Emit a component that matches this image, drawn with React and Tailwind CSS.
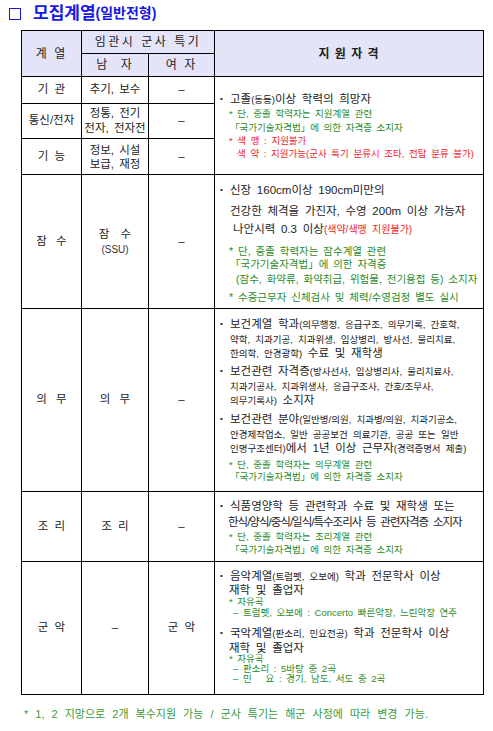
import React from "react";

const MAIN = "text-[11.5px] text-[#222] [word-spacing:2.5px]";
const NOTE = "text-[9.5px] text-[#2b8c2b] [word-spacing:2px]";
const NOTE10 = "text-[10.5px] text-[#2b8c2b] [word-spacing:2px]";
const RED = "text-[9.5px] text-[#f0262e] [word-spacing:2px]";

function Line({ className = "", children }) {
  return (
    <div className={"whitespace-nowrap h-[12px] leading-[12px] " + className}>
      {children}
    </div>
  );
}

function Tight({ className = "", children }) {
  return (
    <div className={"whitespace-nowrap h-[10px] leading-[10px] " + className}>
      {children}
    </div>
  );
}

function B({ className = "", children }) {
  return (
    <div className={"flex whitespace-nowrap h-[12px] leading-[12px] " + MAIN + " " + className}>
      <span className="w-[10px] shrink-0 text-[8px]">•</span>
      <span>{children}</span>
    </div>
  );
}

function S({ children }) {
  return <span className="text-[9.5px] [word-spacing:2.5px]">{children}</span>;
}

export default function App() {
  return (
    <div className="w-[493px] h-[731px] bg-white font-['Liberation_Sans','Noto_Sans_CJK_KR',sans-serif] text-[#222]">
      <div className="h-[30px] pt-[3px] pl-[9px] flex items-start">
        <div className="flex items-center h-[21px] text-[#1717e6]">
          <span className="inline-block w-[12px] h-[12px] border border-[#1717e6]" />
          <span className="ml-[12px] text-[17px] font-bold">모집계열</span>
          <span className="text-[14px] font-bold">(일반전형)</span>
        </div>
      </div>

      <table className="ml-[21px] w-[462px] table-fixed border-collapse text-[11.5px]">
        <colgroup>
          <col className="w-[60px]" />
          <col className="w-[67px]" />
          <col className="w-[66px]" />
          <col className="w-[269px]" />
        </colgroup>
        <tbody>
          <tr className="h-[23px] bg-[#e4e4f9]">
            <td rowSpan={2} className="border border-black text-center align-middle text-[12px] tracking-[2px]">계 열</td>
            <td colSpan={2} className="border border-black text-center align-middle text-[12px] tracking-[2.5px]">임관시 군사 특기</td>
            <td rowSpan={2} className="border border-black text-center align-middle text-[12px] font-semibold tracking-[1px]">지 원 자 격</td>
          </tr>
          <tr className="h-[23px] bg-[#e4e4f9]">
            <td className="border border-black text-center align-middle text-[12px] tracking-[2px] [word-spacing:6px]">남 자</td>
            <td className="border border-black text-center align-middle text-[12px] tracking-[2px]">여 자</td>
          </tr>

          <tr className="h-[27px]">
            <td className="border border-black text-center align-middle [word-spacing:3px]">기 관</td>
            <td className="border border-black text-center align-middle [word-spacing:2px]">추기, 보수</td>
            <td className="border border-black text-center align-middle">–</td>
            <td rowSpan={3} className="border border-black align-top pt-[16px] pl-[5px]">
              <B>
                고졸<S>(동등)</S>이상 학력의 희망자
              </B>
              <Line className={NOTE + " mt-[3px] pl-[9px]"}>* 단, 중졸 학력자는 지원계열 관련</Line>
              <Line className={NOTE + " mt-[2px] pl-[10px]"}>「국가기술자격법」에 의한 자격증 소지자</Line>
              <Line className={RED + " mt-[1px] pl-[9px]"}>* 색 맹 : 지원불가</Line>
              <Line className={RED + " mt-[1px] pl-[17px]"}>색 약 : 지원가능(군사 특기 분류시 조타, 전탐 분류 불가)</Line>
            </td>
          </tr>
          <tr className="h-[35px]">
            <td className="border border-black text-center align-middle">통신/전자</td>
            <td className="border border-black text-center align-middle leading-[15px] [word-spacing:2px]">
              정통, 전기
              <br />
              전자, 전자전
            </td>
            <td className="border border-black text-center align-middle">–</td>
          </tr>
          <tr className="h-[36px]">
            <td className="border border-black text-center align-middle [word-spacing:3px]">기 능</td>
            <td className="border border-black text-center align-middle leading-[14px] [word-spacing:2px]">
              정보, 시설
              <br />
              보급, 재정
            </td>
            <td className="border border-black text-center align-middle">–</td>
          </tr>

          <tr className="h-[134px]">
            <td className="border border-black text-center align-middle [word-spacing:6px]">잠 수</td>
            <td className="border border-black text-center align-middle">
              <div className="leading-[14px] pb-[3px] [word-spacing:8px]">잠 수</div>
              <div className="leading-[12px] text-[10px] text-[#333]">(SSU)</div>
            </td>
            <td className="border border-black text-center align-middle">–</td>
            <td className="border border-black align-top pt-[9px] pl-[5px]">
              <B>신장 160cm이상 190cm미만의</B>
              <Line className={MAIN + " mt-[9px] pl-[10px]"}>건강한 체격을 가진자, 수영 200m 이상 가능자</Line>
              <Line className={MAIN + " mt-[6px] pl-[13px]"}>
                나안시력 0.3 이상<span className="text-[10px] text-[#f0262e]">(색약/색맹 지원불가)</span>
              </Line>
              <Line className={NOTE10 + " mt-[10px] pl-[9px]"}>* 단, 중졸 학력자는 잠수계열 관련</Line>
              <Line className={NOTE10 + " mt-[1px] pl-[10px]"}>「국가기술자격법」에 의한 자격증</Line>
              <Line className={NOTE10 + " mt-[3px] pl-[16px]"}>(잠수, 화약류, 화약취급, 위험물, 전기용접 등) 소지자</Line>
              <Line className={NOTE10 + " mt-[6px] pl-[9px]"}>* 수중근무자 신체검사 및 체력/수영검정 별도 실시</Line>
            </td>
          </tr>

          <tr className="h-[183px]">
            <td className="border border-black text-center align-middle [word-spacing:6px]">의 무</td>
            <td className="border border-black text-center align-middle [word-spacing:6px]">의 무</td>
            <td className="border border-black text-center align-middle">–</td>
            <td className="border border-black align-top pt-[9px] pl-[5px]">
              <B>
                보건계열 학과<S>(의무행정, 응급구조, 의무기록, 간호학,</S>
              </B>
              <Line className={MAIN + " mt-[3px] pl-[10px]"}>
                <S>약학, 치과기공, 치과위생, 임상병리, 방사선, 물리치료,</S>
              </Line>
              <Line className={MAIN + " mt-[2px] pl-[10px]"}>
                <S>한의학, 안경광학)</S> 수료 및 재학생
              </Line>
              <B className="mt-[6px]">
                보건관련 자격증<S>(방사선사, 임상병리사, 물리치료사,</S>
              </B>
              <Line className={MAIN + " mt-[3px] pl-[10px]"}>
                <S>치과기공사, 치과위생사, 응급구조사, 간호/조무사,</S>
              </Line>
              <Line className={MAIN + " mt-[2px] pl-[10px]"}>
                <S>의무기록사)</S> 소지자
              </Line>
              <B className="mt-[7px]">
                보건관련 분야<S>(일반병/의원, 치과병/의원, 치과기공소,</S>
              </B>
              <Line className={MAIN + " mt-[3px] pl-[10px]"}>
                <S>안경제작업소, 일반 공공보건 의료기관, 공공 또는 일반</S>
              </Line>
              <Line className={MAIN + " mt-[2px] pl-[10px]"}>
                <S>인명구조센터)</S>에서 1년 이상 근무자<S>(경력증명서 제출)</S>
              </Line>
              <Line className={NOTE + " mt-[5px] pl-[9px]"}>* 단, 중졸 학력자는 의무계열 관련</Line>
              <Line className={NOTE + " pl-[10px]"}>「국가기술자격법」에 의한 자격증 소지자</Line>
            </td>
          </tr>

          <tr className="h-[70px]">
            <td className="border border-black text-center align-middle [word-spacing:3px]">조 리</td>
            <td className="border border-black text-center align-middle [word-spacing:3px]">조 리</td>
            <td className="border border-black text-center align-middle">–</td>
            <td className="border border-black align-top pt-[8px] pl-[5px]">
              <B>식품영양학 등 관련학과 수료 및 재학생 또는</B>
              <Line className={MAIN + " mt-[4px] pl-[8px] tracking-[-1px]"}>한식/양식/중식/일식/특수조리사 등 관련자격증 소지자</Line>
              <Line className={NOTE + " mt-[3px] pl-[9px]"}>* 단, 중졸 학력자는 조리계열 관련</Line>
              <Line className={NOTE + " mt-[1px] pl-[10px]"}>「국가기술자격법」에 의한 자격증 소지자</Line>
            </td>
          </tr>

          <tr className="h-[133px]">
            <td className="border border-black text-center align-middle [word-spacing:3px]">군 악</td>
            <td className="border border-black text-center align-middle">–</td>
            <td className="border border-black text-center align-middle [word-spacing:3px]">군 악</td>
            <td className="border border-black align-top pt-[8px] pl-[5px]">
              <B>
                음악계열<S>(트럼펫, 오보에)</S> 학과 전문학사 이상
              </B>
              <Line className={MAIN + " mt-[2px] pl-[9px]"}>재학 및 졸업자</Line>
              <Line className={NOTE + " pl-[9px]"}>* 자유곡</Line>
              <Line className={NOTE + " -mt-[1px] pl-[13px]"}>– 트럼펫, 오보에 : Concerto 빠른악장, 느린악장 연주</Line>
              <B className="mt-[8px]">
                국악계열<S>(판소리, 민요전공)</S> 학과 전문학사 이상
              </B>
              <Line className={MAIN + " mt-[3px] pl-[9px]"}>재학 및 졸업자</Line>
              <Tight className={NOTE + " pl-[9px]"}>* 자유곡</Tight>
              <Tight className={NOTE + " pl-[13px]"}>– 판소리 : 5바탕 중 2곡</Tight>
              <Tight className={NOTE + " pl-[13px] whitespace-pre"}>– 민   요 : 경기, 남도, 서도 중 2곡</Tight>
            </td>
          </tr>
        </tbody>
      </table>

      <div className="mt-[12px] pl-[24px] h-[14px] leading-[14px] text-[11px] text-[#3a9a3a] [word-spacing:4px] whitespace-nowrap">
        * 1, 2 지망으로 2개 복수지원 가능 / 군사 특기는 해군 사정에 따라 변경 가능.
      </div>
    </div>
  );
}
